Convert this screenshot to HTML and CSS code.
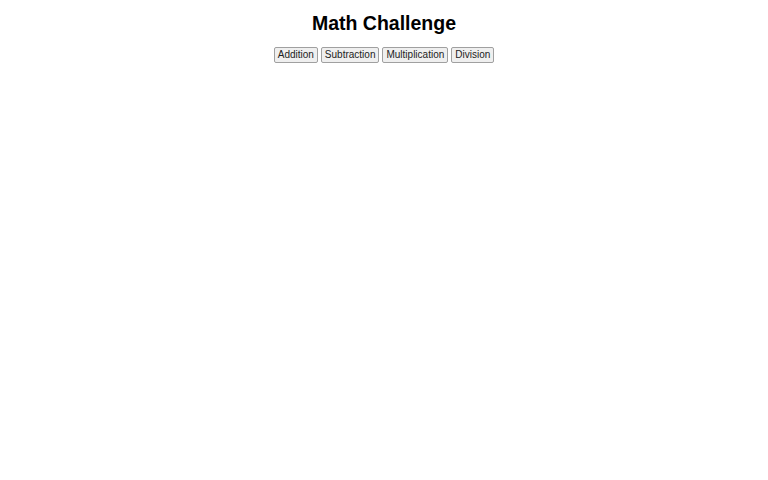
FILE: index.html
```html
<!DOCTYPE html>
<html lang="en">
<head>
    <meta charset="UTF-8">
    <meta name="viewport" content="width=device-width, initial-scale=1.0">
    <title>Math Challenge</title>
    <link rel="stylesheet" href="styles.css">
</head>
<body>
    <h1 class="title">Math Challenge</h1>
    <div class="modes">
        <button class="mode-btn">Addition</button>
        <button class="mode-btn">Subtraction</button>
        <button class="mode-btn">Multiplication</button>
        <button class="mode-btn">Division</button>
    </div>
</body>
</html>
```

FILE: styles.css
```css
body {
    font-family: "Liberation Sans", Arial, sans-serif;
    background-color: #fff;
    margin: 0;
    padding: 0;
    text-align: center;
}

.title {
    font-size: 19.5px;
    margin: 12px 0 12px 0;
    color: #000;
}

.modes {
    display: flex;
    justify-content: center;
    gap: 3px;
}

.mode-btn {
    font-family: "Liberation Sans", Arial, sans-serif;
    font-size: 10px;
    line-height: 12px;
    padding: 1px 3px;
    background-color: #efefef;
    border: 1px solid #a0a0a0;
    border-radius: 2px;
    color: #222;
    cursor: pointer;
}

.mode-btn:hover {
    background-color: #e5e5e5;
}
```
